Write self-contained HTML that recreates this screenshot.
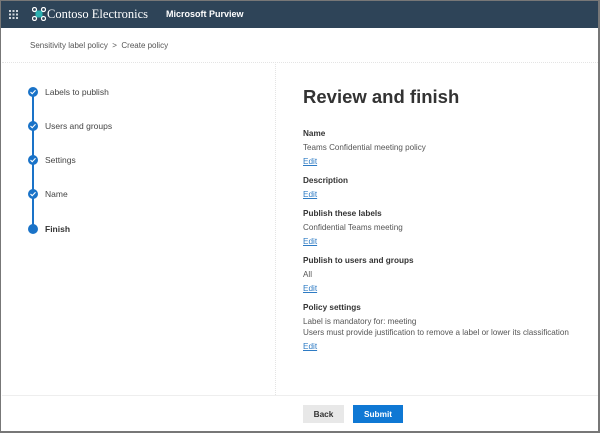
<!DOCTYPE html><html><head><style>
*{margin:0;padding:0;box-sizing:border-box}
body{width:600px;height:433px;overflow:hidden;font-family:"Liberation Sans",sans-serif;background:#fff;position:relative}
.frame{position:absolute;inset:0;border:1px solid #777;border-right-width:2px;border-bottom-width:2px}
.hdr{position:absolute;left:0;top:0;width:600px;height:28px;background:#2e4458;color:#fff}
.t{position:absolute;white-space:nowrap}
.step{position:absolute;left:45px;font-size:8.5px;color:#444}
.dot{position:absolute;left:28px;width:10px;height:10px;border-radius:50%;background:#1a73c8}
.dot svg{position:absolute;left:2px;top:2px}
.line{position:absolute;left:32px;width:2px;background:#1a73c8}
.h{position:absolute;left:303px;font-size:8.2px;font-weight:bold;color:#333}
.v{position:absolute;left:303px;font-size:8.1px;color:#555}
.e{position:absolute;left:303px;font-size:8.2px;color:#2e7bc4;text-decoration:underline}
</style></head><body>
<div class="hdr">
<svg class="t" style="left:9px;top:10px" width="9" height="9"><g fill="#cfd6dd"><rect x="0" y="0" width="2" height="2"/><rect x="3.5" y="0" width="2" height="2"/><rect x="7" y="0" width="2" height="2"/><rect x="0" y="3.5" width="2" height="2"/><rect x="3.5" y="3.5" width="2" height="2"/><rect x="7" y="3.5" width="2" height="2"/><rect x="0" y="7" width="2" height="2"/><rect x="3.5" y="7" width="2" height="2"/><rect x="7" y="7" width="2" height="2"/></g></svg>
<svg class="t" style="left:32px;top:7px" width="14" height="14"><rect x="3.5" y="3.5" width="7" height="7" fill="#2bb0b0"/><g fill="none" stroke="#fff" stroke-width="1.2"><circle cx="2.5" cy="2.5" r="2"/><circle cx="11.5" cy="2.5" r="2"/><circle cx="2.5" cy="11.5" r="2"/><circle cx="11.5" cy="11.5" r="2"/></g></svg>
<div class="t" style="left:47px;top:7px;font-family:'Liberation Serif',serif;font-size:12.5px">Contoso Electronics</div>
<div class="t" style="left:166px;top:9px;font-size:9px;font-weight:bold">Microsoft Purview</div>
</div>
<div class="t" style="left:30px;top:41px;font-size:8px;color:#555">Sensitivity label policy &nbsp;&gt;&nbsp; Create policy</div>
<div style="position:absolute;left:2px;right:2px;top:62px;border-top:1px dotted #e4e4e4"></div>
<div style="position:absolute;left:275px;top:62px;height:333px;border-left:1px dotted #e4e4e4"></div>
<div style="position:absolute;left:2px;right:2px;top:395px;border-top:1px solid #eee"></div>
<div class="line" style="top:95px;height:134px"></div>
<div class="dot" style="top:87px"><svg width="6" height="6"><path d="M.5 3l1.7 1.7L5.5 1.3" stroke="#fff" fill="none" stroke-width="1.1"/></svg></div>
<div class="dot" style="top:121px"><svg width="6" height="6"><path d="M.5 3l1.7 1.7L5.5 1.3" stroke="#fff" fill="none" stroke-width="1.1"/></svg></div>
<div class="dot" style="top:155px"><svg width="6" height="6"><path d="M.5 3l1.7 1.7L5.5 1.3" stroke="#fff" fill="none" stroke-width="1.1"/></svg></div>
<div class="dot" style="top:189px"><svg width="6" height="6"><path d="M.5 3l1.7 1.7L5.5 1.3" stroke="#fff" fill="none" stroke-width="1.1"/></svg></div>
<div class="dot" style="top:224px"></div>
<div class="step" style="top:87px">Labels to publish</div>
<div class="step" style="top:121px">Users and groups</div>
<div class="step" style="top:155px">Settings</div>
<div class="step" style="top:189px">Name</div>
<div class="step" style="top:224px;font-weight:bold;color:#333">Finish</div>
<div class="t" style="left:303px;top:86px;font-size:18.5px;font-weight:bold;color:#333">Review and finish</div>
<div class="h" style="top:129px">Name</div>
<div class="v" style="top:143px">Teams Confidential meeting policy</div>
<div class="e" style="top:157px">Edit</div>
<div class="h" style="top:176px">Description</div>
<div class="e" style="top:190px">Edit</div>
<div class="h" style="top:209px">Publish these labels</div>
<div class="v" style="top:223px">Confidential Teams meeting</div>
<div class="e" style="top:237px">Edit</div>
<div class="h" style="top:256px">Publish to users and groups</div>
<div class="v" style="top:270px">All</div>
<div class="e" style="top:284px">Edit</div>
<div class="h" style="top:303px">Policy settings</div>
<div class="v" style="top:317px">Label is mandatory for: meeting</div>
<div class="v" style="top:328px">Users must provide justification to remove a label or lower its classification</div>
<div class="e" style="top:342px">Edit</div>
<div class="t" style="left:303px;top:405px;width:41px;height:18px;background:#e8e8e8;font-size:8.3px;font-weight:bold;color:#333;text-align:center;line-height:18px">Back</div>
<div class="t" style="left:353px;top:405px;width:50px;height:18px;background:#0f78d4;font-size:8.3px;font-weight:bold;color:#fff;text-align:center;line-height:18px">Submit</div>
<div class="frame"></div>
</body></html>
